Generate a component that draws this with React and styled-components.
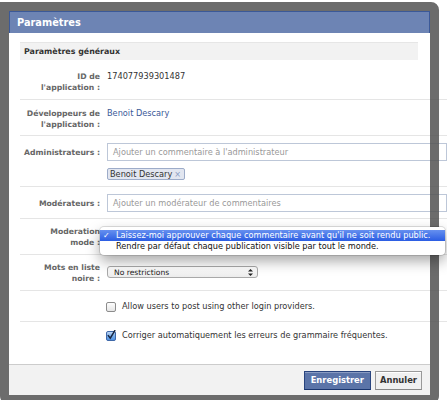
import React from "react";
import styled, { createGlobalStyle } from "styled-components";

const GlobalStyle = createGlobalStyle`
  html, body {
    margin: 0;
    padding: 0;
    background: #ffffff;
  }
  * {
    box-sizing: border-box;
  }
`;

const Page = styled.div`
  position: relative;
  width: 447px;
  height: 400px;
  overflow: hidden;
  background: #ffffff;
  font-family: "DejaVu Sans", "Liberation Sans", sans-serif;
  font-size: 8.2px;
  color: #333333;
`;

// the modal sits over the page, so it is positioned
const Dialog = styled.div`
  position: absolute;
  left: 0;
  top: 2px;
  width: 439px;
  padding: 9px;
  display: flex;
  flex-direction: column;

  &::after {
    content: "";
    position: absolute;
    inset: 0;
    border: 9px solid rgba(82, 82, 82, 0.85);
    border-radius: 0 8px 8px 8px;
    pointer-events: none;
  }
`;

const Header = styled.div`
  height: 22px;
  background: #6d84b4;
  border: 1px solid #3b5998;
  border-bottom: none;
  color: #ffffff;
  font-weight: bold;
  font-size: 9.8px;
  display: flex;
  align-items: center;
  padding-left: 7px;
`;

const Body = styled.div`
  background: #ffffff;
  padding: 9px 12px 11px 11px;
`;

const SectionTitle = styled.div`
  height: 18px;
  background: #f2f2f2;
  border-top: 1px solid #e6e6e6;
  font-weight: bold;
  font-size: 7.9px;
  color: #333333;
  display: flex;
  align-items: center;
  padding-left: 4px;
  margin-bottom: 4px;
`;

const Rows = styled.div`
  margin-right: -29px;
`;

const Row = styled.div`
  position: relative;
  display: grid;
  grid-template-columns: 80px 1fr;
  column-gap: 7px;
  align-items: ${(p) => (p.$center ? "center" : "start")};
  padding: ${(p) => p.$pad || "7px 0 6px"};
  border-bottom: ${(p) => (p.$last ? "none" : "1px solid #e5e5e5")};
  line-height: 11px;
`;

const Label = styled.div`
  text-align: right;
  font-weight: bold;
  font-size: 7.7px;
  color: #666666;
  line-height: 11px;
  margin-top: ${(p) => p.$offset || "0"};
`;

const Value = styled.div`
  color: ${(p) => (p.$link ? "#3b5998" : "#333333")};
  display: flex;
  flex-direction: column;
  align-items: flex-start;
  gap: 7px;
`;

const TextInput = styled.div`
  width: 100%;
  height: 18px;
  border: 1px solid #bdc7d8;
  background: #ffffff;
  color: #999999;
  display: flex;
  align-items: center;
  padding-left: 5px;
`;

const Token = styled.span`
  height: 12px;
  display: inline-flex;
  align-items: center;
  gap: 2px;
  padding: 0 3px 0 2px;
  background: #e2e6f0;
  border: 1px solid #9dacc9;
  border-radius: 2px;
  color: #333333;
`;

const TokenRemove = styled.span`
  color: #8a9bc2;
  font-size: 8px;
`;

const SelectBox = styled.div`
  width: 151px;
  height: 12px;
  margin-top: 4px;
  border: 1px solid #a9a9a9;
  border-radius: 3px;
  background: linear-gradient(#ffffff, #ececec);
  display: flex;
  align-items: center;
  justify-content: space-between;
  padding: 0 4px 0 6px;
  color: #222222;
  font-size: 7.6px;
`;

const Menu = styled.div`
  position: absolute;
  left: 80px;
  top: 8px;
  width: 345px;
  padding: 3px 0;
  background: #ffffff;
  border-radius: 4px;
  box-shadow: 0 6px 14px rgba(0, 0, 0, 0.35), 0 0 0 1px rgba(0, 0, 0, 0.12);
  z-index: 2;
`;

const MenuItem = styled.div`
  height: 11px;
  display: flex;
  align-items: center;
  padding-left: 3px;
  color: ${(p) => (p.$active ? "#ffffff" : "#111111")};
  background: ${(p) =>
    p.$active ? "linear-gradient(#6690ef, #2b5de3)" : "transparent"};
`;

const Check = styled.span`
  width: 13px;
  font-size: 8px;
`;

const CheckRow = styled.div`
  display: flex;
  align-items: center;
  gap: 6px;
  margin-left: -1px;
  color: #333333;
`;

const Footer = styled.div`
  height: 31px;
  background: #f2f2f2;
  border-top: 1px solid #cccccc;
  display: flex;
  justify-content: flex-end;
  align-items: center;
  gap: 4px;
  padding: 0 8px 0 0;
`;

const Button = styled.button`
  height: 19px;
  padding: 0 ${(p) => (p.$primary ? "6px" : "4px")};
  font-family: inherit;
  font-size: 8.4px;
  font-weight: bold;
  color: ${(p) => (p.$primary ? "#ffffff" : "#333333")};
  background: ${(p) => (p.$primary ? "#5b74a8" : "#f0f0f0")};
  border: 1px solid ${(p) => (p.$primary ? "#29447e" : "#999999")};
  border-bottom-color: ${(p) => (p.$primary ? "#1a356e" : "#888888")};
  box-shadow: inset 0 1px 0 ${(p) => (p.$primary ? "#8a9cc2" : "#ffffff")};
  cursor: pointer;
`;

function UpDownArrows() {
  return (
    <svg width="5" height="7" viewBox="0 0 5 7">
      <path d="M2.5 0 L5 2.6 H0 Z" fill="#222" />
      <path d="M2.5 7 L5 4.4 H0 Z" fill="#222" />
    </svg>
  );
}

function CheckBox({ checked }) {
  if (!checked) {
    return (
      <svg width="10" height="10" viewBox="0 0 10 10">
        <defs>
          <linearGradient id="cbOff" x1="0" y1="0" x2="0" y2="1">
            <stop offset="0" stopColor="#ffffff" />
            <stop offset="1" stopColor="#e4e4e4" />
          </linearGradient>
        </defs>
        <rect x="0.5" y="0.5" width="9" height="9" rx="1.5" fill="url(#cbOff)" stroke="#8c8c8c" />
      </svg>
    );
  }
  return (
    <svg width="10" height="11" viewBox="0 0 10 11">
      <defs>
        <linearGradient id="cbOn" x1="0" y1="0" x2="0" y2="1">
          <stop offset="0" stopColor="#c7dcf6" />
          <stop offset="0.5" stopColor="#7aaee9" />
          <stop offset="1" stopColor="#4b8ee0" />
        </linearGradient>
      </defs>
      <rect x="0.5" y="1.5" width="9" height="9" rx="1.5" fill="url(#cbOn)" stroke="#3f68a8" />
      <path d="M2.3 5.6 L4.3 8.2 L8.8 0.6" fill="none" stroke="#16243f" strokeWidth="1.5" strokeLinecap="round" />
    </svg>
  );
}

export default function App() {
  const settings = {
    appId: "174077939301487",
    developer: "Benoit Descary",
    admins: ["Benoit Descary"],
    moderationOptions: [
      "Laissez-moi approuver chaque commentaire avant qu'il ne soit rendu public.",
      "Rendre par défaut chaque publication visible par tout le monde.",
    ],
    blacklist: "No restrictions",
  };

  return (
    <Page>
      <GlobalStyle />
      <Dialog>
        <Header>Paramètres</Header>
        <Body>
          <SectionTitle>Paramètres généraux</SectionTitle>
          <Rows>
            <Row $pad="7px 0 6px">
              <Label>
                ID de
                <br />
                l'application :
              </Label>
              <Value>{settings.appId}</Value>
            </Row>
            <Row $pad="8px 0 5px">
              <Label>
                Développeurs de
                <br />
                l'application :
              </Label>
              <Value $link>{settings.developer}</Value>
            </Row>
            <Row>
              <Label $offset="4px">Administrateurs :</Label>
              <Value>
                <TextInput>Ajouter un commentaire à l'administrateur</TextInput>
                {settings.admins.map((name) => (
                  <Token key={name}>
                    {name}
                    <TokenRemove>×</TokenRemove>
                  </Token>
                ))}
              </Value>
            </Row>
            <Row $center>
              <Label>Modérateurs :</Label>
              <Value>
                <TextInput>Ajouter un modérateur de commentaires</TextInput>
              </Value>
            </Row>
            <Row $pad="7px 0 6px">
              <Label>
                Moderation
                <br />
                mode :
              </Label>
              <Value />
              <Menu>
                {settings.moderationOptions.map((opt, i) => (
                  <MenuItem key={opt} $active={i === 0}>
                    <Check>{i === 0 ? "✓" : ""}</Check>
                    {opt}
                  </MenuItem>
                ))}
              </Menu>
            </Row>
            <Row $pad="7px 0 6px">
              <Label>
                Mots en liste
                <br />
                noire :
              </Label>
              <Value>
                <SelectBox>
                  {settings.blacklist}
                  <UpDownArrows />
                </SelectBox>
              </Value>
            </Row>
            <Row $pad="10px 0 9px">
              <span />
              <CheckRow>
                <CheckBox />
                Allow users to post using other login providers.
              </CheckRow>
            </Row>
            <Row $pad="8px 0 12px" $last>
              <span />
              <CheckRow>
                <CheckBox checked />
                Corriger automatiquement les erreurs de grammaire fréquentes.
              </CheckRow>
            </Row>
          </Rows>
        </Body>
        <Footer>
          <Button $primary>Enregistrer</Button>
          <Button>Annuler</Button>
        </Footer>
      </Dialog>
    </Page>
  );
}
